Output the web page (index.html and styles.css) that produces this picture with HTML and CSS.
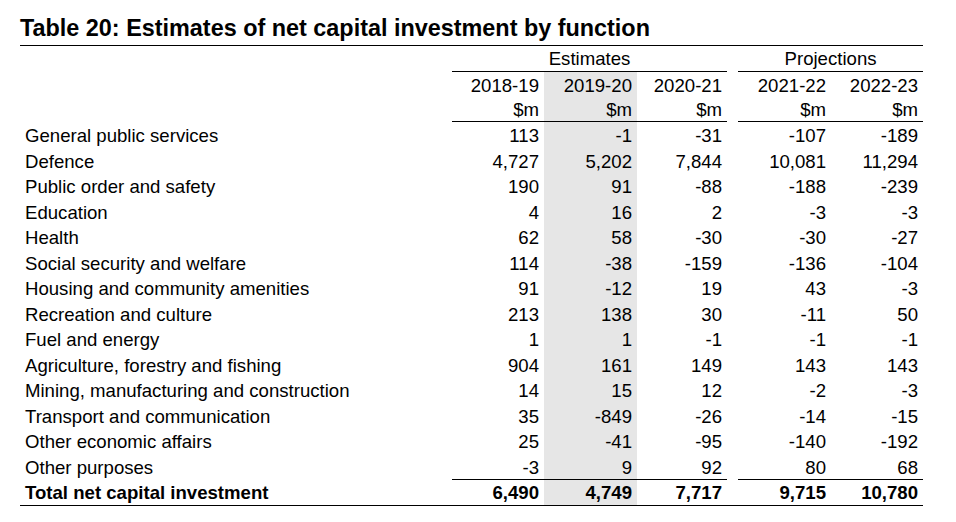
FILE: index.html
```html
<!DOCTYPE html>
<html lang="en">
<head>
    <meta charset="UTF-8">
    <meta name="viewport" content="width=device-width, initial-scale=1.0">
    <title>Table 20: Estimates of net capital investment by function</title>
    <link rel="stylesheet" href="styles.css">
</head>
<body>
    <!-- Table title -->
    <h1 class="table-title">Table 20: Estimates of net capital investment by function</h1>

    <!-- Investment by function table -->
    <table class="fn-table">
        <colgroup>
            <col class="col-label">
            <col class="col-num">
            <col class="col-num col-wide">
            <col class="col-num col-narrow">
            <col class="col-gap">
            <col class="col-num col-wide">
            <col class="col-num">
        </colgroup>
        <thead>
            <tr class="row-group">
                <th></th>
                <th colspan="3" class="group">Estimates</th>
                <th class="gap"></th>
                <th colspan="2" class="group">Projections</th>
            </tr>
            <tr class="row-year">
                <th></th>
                <th class="num">2018-19</th>
                <th class="num shade">2019-20</th>
                <th class="num">2020-21</th>
                <th class="gap"></th>
                <th class="num">2021-22</th>
                <th class="num">2022-23</th>
            </tr>
            <tr class="row-unit">
                <th></th>
                <th class="num">$m</th>
                <th class="num shade">$m</th>
                <th class="num">$m</th>
                <th class="gap"></th>
                <th class="num">$m</th>
                <th class="num">$m</th>
            </tr>
        </thead>
        <tbody>
            <tr><td class="label">General public services</td><td class="num">113</td><td class="num shade">-1</td><td class="num">-31</td><td class="gap"></td><td class="num">-107</td><td class="num">-189</td></tr>
            <tr><td class="label">Defence</td><td class="num">4,727</td><td class="num shade">5,202</td><td class="num">7,844</td><td class="gap"></td><td class="num">10,081</td><td class="num">11,294</td></tr>
            <tr><td class="label">Public order and safety</td><td class="num">190</td><td class="num shade">91</td><td class="num">-88</td><td class="gap"></td><td class="num">-188</td><td class="num">-239</td></tr>
            <tr><td class="label">Education</td><td class="num">4</td><td class="num shade">16</td><td class="num">2</td><td class="gap"></td><td class="num">-3</td><td class="num">-3</td></tr>
            <tr><td class="label">Health</td><td class="num">62</td><td class="num shade">58</td><td class="num">-30</td><td class="gap"></td><td class="num">-30</td><td class="num">-27</td></tr>
            <tr><td class="label">Social security and welfare</td><td class="num">114</td><td class="num shade">-38</td><td class="num">-159</td><td class="gap"></td><td class="num">-136</td><td class="num">-104</td></tr>
            <tr><td class="label">Housing and community amenities</td><td class="num">91</td><td class="num shade">-12</td><td class="num">19</td><td class="gap"></td><td class="num">43</td><td class="num">-3</td></tr>
            <tr><td class="label">Recreation and culture</td><td class="num">213</td><td class="num shade">138</td><td class="num">30</td><td class="gap"></td><td class="num">-11</td><td class="num">50</td></tr>
            <tr><td class="label">Fuel and energy</td><td class="num">1</td><td class="num shade">1</td><td class="num">-1</td><td class="gap"></td><td class="num">-1</td><td class="num">-1</td></tr>
            <tr><td class="label">Agriculture, forestry and fishing</td><td class="num">904</td><td class="num shade">161</td><td class="num">149</td><td class="gap"></td><td class="num">143</td><td class="num">143</td></tr>
            <tr><td class="label">Mining, manufacturing and construction</td><td class="num">14</td><td class="num shade">15</td><td class="num">12</td><td class="gap"></td><td class="num">-2</td><td class="num">-3</td></tr>
            <tr><td class="label">Transport and communication</td><td class="num">35</td><td class="num shade">-849</td><td class="num">-26</td><td class="gap"></td><td class="num">-14</td><td class="num">-15</td></tr>
            <tr><td class="label">Other economic affairs</td><td class="num">25</td><td class="num shade">-41</td><td class="num">-95</td><td class="gap"></td><td class="num">-140</td><td class="num">-192</td></tr>
            <tr class="row-last"><td class="label">Other purposes</td><td class="num">-3</td><td class="num shade">9</td><td class="num">92</td><td class="gap"></td><td class="num">80</td><td class="num">68</td></tr>
        </tbody>
        <tfoot>
            <tr class="row-total"><td class="label">Total net capital investment</td><td class="num">6,490</td><td class="num shade">4,749</td><td class="num">7,717</td><td class="gap"></td><td class="num">9,715</td><td class="num">10,780</td></tr>
        </tfoot>
    </table>
</body>
</html>
```

FILE: styles.css
```css
/* Page */
body {
    margin: 0;
    background-color: #fff;
    color: #000;
    font-family: "Liberation Sans", Arial, sans-serif;
}

/* Title with rule underneath */
.table-title {
    width: 903px;
    margin: 0 0 0 20px;
    padding: 15px 0 3px 0;
    font-size: 23.4px;
    line-height: 27px;
    font-weight: bold;
    border-bottom: 1px solid #000;
}

/* Table */
.fn-table {
    width: 903px;
    margin-left: 20px;
    table-layout: fixed;
    border-collapse: separate;
    border-spacing: 0;
    font-size: 18.6px;
}
.col-label { width: 432px; }
.col-num { width: 92px; }
.col-wide { width: 93px; }
.col-narrow { width: 90px; }
.col-gap { width: 11px; }

.fn-table th,
.fn-table td {
    padding: 2px 0 0 0;
    font-weight: normal;
    white-space: nowrap;
    line-height: 23.5px;
}
.fn-table .label {
    padding-left: 5px;
    text-align: left;
}
.fn-table .num {
    padding-right: 5px;
    text-align: right;
}
.fn-table .shade {
    background-color: #e6e6e6;
}

/* Header rows */
.row-group th {
    padding-top: 1px;
    line-height: 24px;
}
.row-group .group {
    text-align: center;
    border-bottom: 1px solid #000;
}
.row-year th {
    padding-top: 2px;
    line-height: 23px;
}
.row-unit th {
    padding-top: 1px;
    line-height: 23px;
}
.row-unit .num {
    border-bottom: 1px solid #000;
}

/* Rule above total */
.row-last .num {
    border-bottom: 1px solid #000;
}

/* Total row */
.row-total td {
    font-weight: bold;
    padding-top: 1px;
    line-height: 24px;
    border-bottom: 1px solid #000;
}
```
